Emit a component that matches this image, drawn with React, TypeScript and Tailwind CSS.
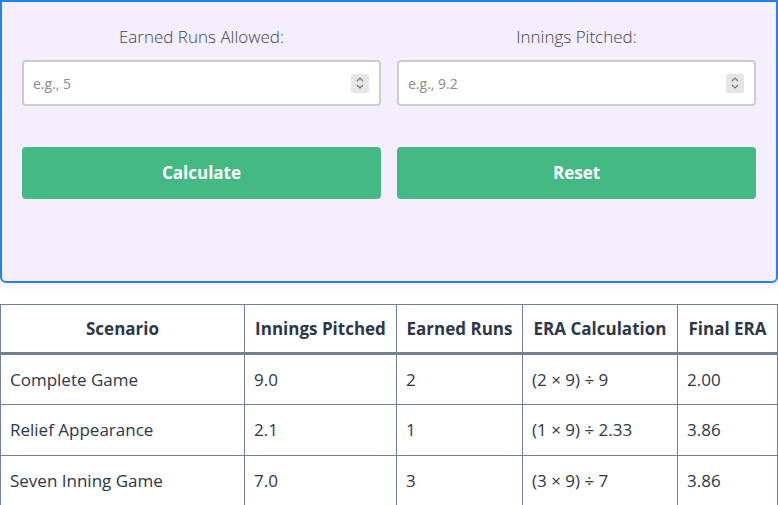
import React from 'react';

const rows = [
  ['Complete Game', '9.0', '2', '(2 × 9) ÷ 9', '2.00'],
  ['Relief Appearance', '2.1', '1', '(1 × 9) ÷ 2.33', '3.86'],
  ['Seven Inning Game', '7.0', '3', '(3 × 9) ÷ 7', '3.86'],
];

function Spinner() {
  return (
    <span className="flex h-[19px] w-[18px] items-center justify-center rounded-[2px] bg-[#e6e6e6]">
      <svg width="10" height="14" viewBox="0 0 10 14" fill="none" stroke="#777" strokeWidth="1.2">
        <path d="M2 5 L5 2 L8 5" />
        <path d="M2 9 L5 12 L8 9" />
      </svg>
    </span>
  );
}

function Field({ label, placeholder }: { label: string; placeholder: string }) {
  return (
    <div className="flex flex-col">
      <label className="mb-[11px] text-center text-[17px] font-light leading-[24px] text-[#3f4450]">{label}</label>
      <div className="flex h-[46px] items-center rounded-[4px] border-2 border-[#cdcdcd] bg-white pl-[9px] pr-[10px]">
        <input
          type="text"
          placeholder={placeholder}
          className="flex-1 bg-transparent text-[14px] text-[#333] outline-none placeholder:text-[#8a8a8a]"
        />
        <Spinner />
      </div>
    </div>
  );
}

export default function App() {
  return (
    <div className="min-h-screen bg-white font-['Open_Sans','Noto_Sans',sans-serif] text-[#2d3748]">
      <div className="rounded-b-[6px] border-2 border-[#2680f0] bg-[#f4eefd] px-[20px] pt-[23px] pb-[82px] shadow-[0_4px_8px_rgba(0,0,0,0.06)]">
        <div className="grid grid-cols-2 gap-[16px]">
          <Field label="Earned Runs Allowed:" placeholder="e.g., 5" />
          <Field label="Innings Pitched:" placeholder="e.g., 9.2" />
        </div>
        <div className="mt-[41px] grid grid-cols-2 gap-[16px]">
          <button className="h-[52px] rounded-[4px] bg-[#44b983] text-[17px] font-bold text-white">Calculate</button>
          <button className="h-[52px] rounded-[4px] bg-[#44b983] text-[17px] font-bold text-white">Reset</button>
        </div>
      </div>

      <table className="mt-[21px] w-full table-fixed border-collapse text-[17px]">
        <colgroup>
          <col className="w-[244px]" />
          <col className="w-[152px]" />
          <col className="w-[126px]" />
          <col className="w-[155px]" />
          <col />
        </colgroup>
        <thead>
          <tr className="h-[49px] border-b-[3px] border-[#718096]">
            {['Scenario', 'Innings Pitched', 'Earned Runs', 'ERA Calculation', 'Final ERA'].map((h) => (
              <th key={h} className="border border-b-[3px] border-[#718096] px-[4px] text-center font-bold text-[#2d3748]">
                {h}
              </th>
            ))}
          </tr>
        </thead>
        <tbody>
          {rows.map((r) => (
            <tr key={r[0]} className="h-[51px]">
              {r.map((c, i) => (
                <td key={i} className="border border-[#718096] px-[9px] text-left text-[#2d3748]">
                  {c}
                </td>
              ))}
            </tr>
          ))}
        </tbody>
      </table>
    </div>
  );
}
